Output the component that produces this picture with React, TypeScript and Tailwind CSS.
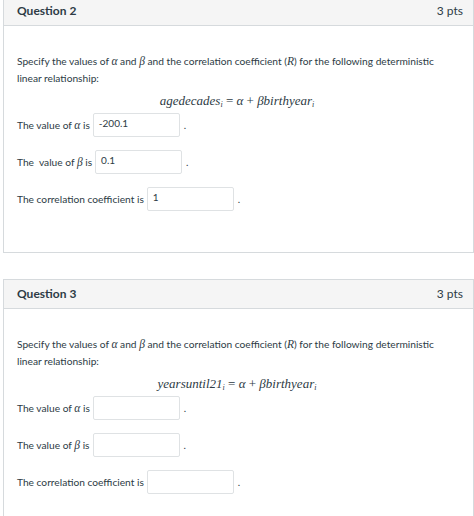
const mathFont = { fontFamily: '"Liberation Serif", "DejaVu Serif", serif' };

function M({ children }: { children: React.ReactNode }) {
  return <span className="font-['Liberation_Serif',serif] text-[11.5px] italic">{children}</span>;
}

function Row({ label, value }: { label: React.ReactNode; value: string }) {
  return (
    <div className="flex h-6 items-center">
      <span>{label}</span>
      <div className="ml-[3px] flex h-6 w-[87px] items-start rounded-[2px] border border-[#dfe2e4] bg-white pl-[5px] pt-[3px] text-[10px] leading-[12px] text-[#2d3b45]">
        {value}
      </div>
      <span className="ml-[4px]">.</span>
    </div>
  );
}

function Question({
  num,
  lhs,
  values,
  wideBeta,
}: {
  num: number;
  lhs: React.ReactNode;
  values: [string, string, string];
  wideBeta?: boolean;
}) {
  return (
    <div className="ml-[3px] border border-[#d6dadd] bg-white">
      <div className="flex h-[29px] items-center justify-between border-b border-[#d6dadd] bg-[#f5f5f5] pl-[13px] pr-[10px]">
        <span className="text-[12px] font-bold text-[#2d3b45]">Question {num}</span>
        <span className="text-[12px] text-[#2d3b45]">3 pts</span>
      </div>
      <div className="pl-[13px] pr-4 pb-[41px] pt-[27px] text-[10.2px] leading-[17px] text-[#2d3b45]">
        <p>
          Specify the values of <M>α</M> and <M>β</M> and the correlation coefficient (<M>R</M>) for the following
          deterministic linear relationship:
        </p>
        <p className="mt-[5px] text-center" style={mathFont}>
          <span className="text-[13px] italic">{lhs}</span>
          <span className="text-[13px]"> = </span>
          <span className="text-[13px] italic">α</span>
          <span className="text-[13px]"> + </span>
          <span className="text-[13px] italic">βbirthyear</span>
          <sub className="text-[8px] italic">i</sub>
        </p>
        <div className="mt-[3px] flex flex-col gap-[13px]">
          <Row label={<>The value of <M>α</M> is</>} value={values[0]} />
          <Row
            label={
              wideBeta ? (
                <>The&nbsp; value of <M>β</M> is</>
              ) : (
                <>The value of <M>β</M> is</>
              )
            }
            value={values[1]}
          />
          <Row label="The correlation coefficient is" value={values[2]} />
        </div>
      </div>
    </div>
  );
}

export default function App() {
  return (
    <div className="h-[516px] w-[474px] overflow-hidden bg-white font-['Lato',sans-serif]">
      <div className="-mt-[4px] w-[474px]">
        <Question
          num={2}
          lhs={
            <>
              agedecades<sub className="text-[8px]">i</sub>
            </>
          }
          values={["-200.1", "0.1", "1"]}
          wideBeta
        />
        <div className="h-[26px]" />
        <Question
          num={3}
          lhs={
            <>
              yearsuntil21<sub className="text-[8px]">i</sub>
            </>
          }
          values={["", "", ""]}
        />
      </div>
    </div>
  );
}
